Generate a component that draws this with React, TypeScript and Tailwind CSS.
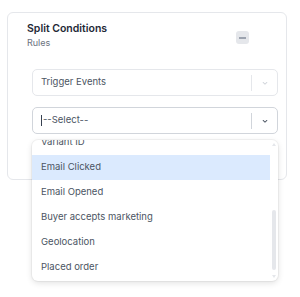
import React from "react";

const Chevron = ({ color }: { color: string }) => (
  <svg width="8" height="8" viewBox="0 0 20 20" fill={color}>
    <path d="M4.516 7.548c.436-.446 1.043-.481 1.576 0L10 11.295l3.908-3.747c.533-.481 1.141-.446 1.574 0 .436.445.408 1.197 0 1.615-.406.418-4.695 4.502-4.695 4.502a1.095 1.095 0 0 1-1.576 0S4.924 9.581 4.516 9.163c-.409-.418-.436-1.17 0-1.615z" />
  </svg>
);

export default function App() {
  const items = [
    "Variant ID",
    "Email Clicked",
    "Email Opened",
    "Buyer accepts marketing",
    "Geolocation",
    "Placed order",
  ];
  return (
    <div
      className="w-[300px] h-[297px] bg-white relative"
      style={{ fontFamily: "Inter, 'Noto Sans', sans-serif" }}
    >
      <div className="absolute left-[7px] top-[12px] w-[280px] h-[168px] border border-[#e5e7eb] rounded-[6px] bg-white">
        <div className="flex items-start pl-[19px] pr-[37px] pt-[9px]">
          <div className="flex-1">
            <div className="text-[10.5px] leading-[14px] font-semibold text-[#1f2937]">
              Split Conditions
            </div>
            <div className="mt-[1px] text-[9px] leading-[12px] text-[#6b7280]">Rules</div>
          </div>
          <div className="mt-[9px] w-[13px] h-[13px] rounded-[3px] bg-[#e5e7eb] flex items-center justify-center">
            <div className="w-[7px] h-[2px] bg-[#9ca3af]" />
          </div>
        </div>
        <div className="ml-[24px] mt-[20px] w-[246px] flex flex-col gap-[11px]">
          <div className="h-[27px] border border-[#e5e7eb] rounded-[5px] flex items-center">
            <div className="flex-1 pl-[8px] text-[9.5px] text-[#4b5563]">Trigger Events</div>
            <div className="w-px h-[16px] bg-[#e5e7eb]" />
            <div className="w-[25px] flex justify-center">
              <Chevron color="#d1d5db" />
            </div>
          </div>
          <div className="h-[27px] border border-[#d1d5db] rounded-[5px] flex items-center">
            <div className="flex-1 pl-[8px] text-[9.5px] text-[#4b5563] flex items-center">
              <span className="inline-block w-px h-[11px] bg-[#374151] mr-[1px]" />
              --Select--
            </div>
            <div className="w-px h-[16px] bg-[#d1d5db]" />
            <div className="w-[25px] flex justify-center">
              <Chevron color="#4b5563" />
            </div>
          </div>
        </div>
      </div>
      <div className="absolute left-[32px] top-[140px] w-[246px] h-[141px] bg-white rounded-[6px] shadow-[0_2px_6px_rgba(0,0,0,0.12),0_0_0_1px_rgba(0,0,0,0.04)] overflow-hidden">
        <div className="-mt-[10px] mr-[8px]">
          {items.map((t, i) => (
            <div
              key={t}
              className={`h-[25px] flex items-center pl-[9px] text-[9.5px] text-[#4b5563] ${i === 1 ? "bg-[#dbeafe]" : ""}`}
            >
              {t}
            </div>
          ))}
        </div>
        <div className="absolute right-[2px] top-[70px] w-[4px] h-[60px] rounded-full bg-[#e5e7eb]" />
        <div className="absolute right-[2px] top-[3px] w-0 h-0 border-l-[2.5px] border-r-[2.5px] border-b-[3px] border-l-transparent border-r-transparent border-b-[#e5e7eb]" />
        <div className="absolute right-[2px] bottom-[3px] w-0 h-0 border-l-[2.5px] border-r-[2.5px] border-t-[3px] border-l-transparent border-r-transparent border-t-[#e5e7eb]" />
      </div>
    </div>
  );
}
